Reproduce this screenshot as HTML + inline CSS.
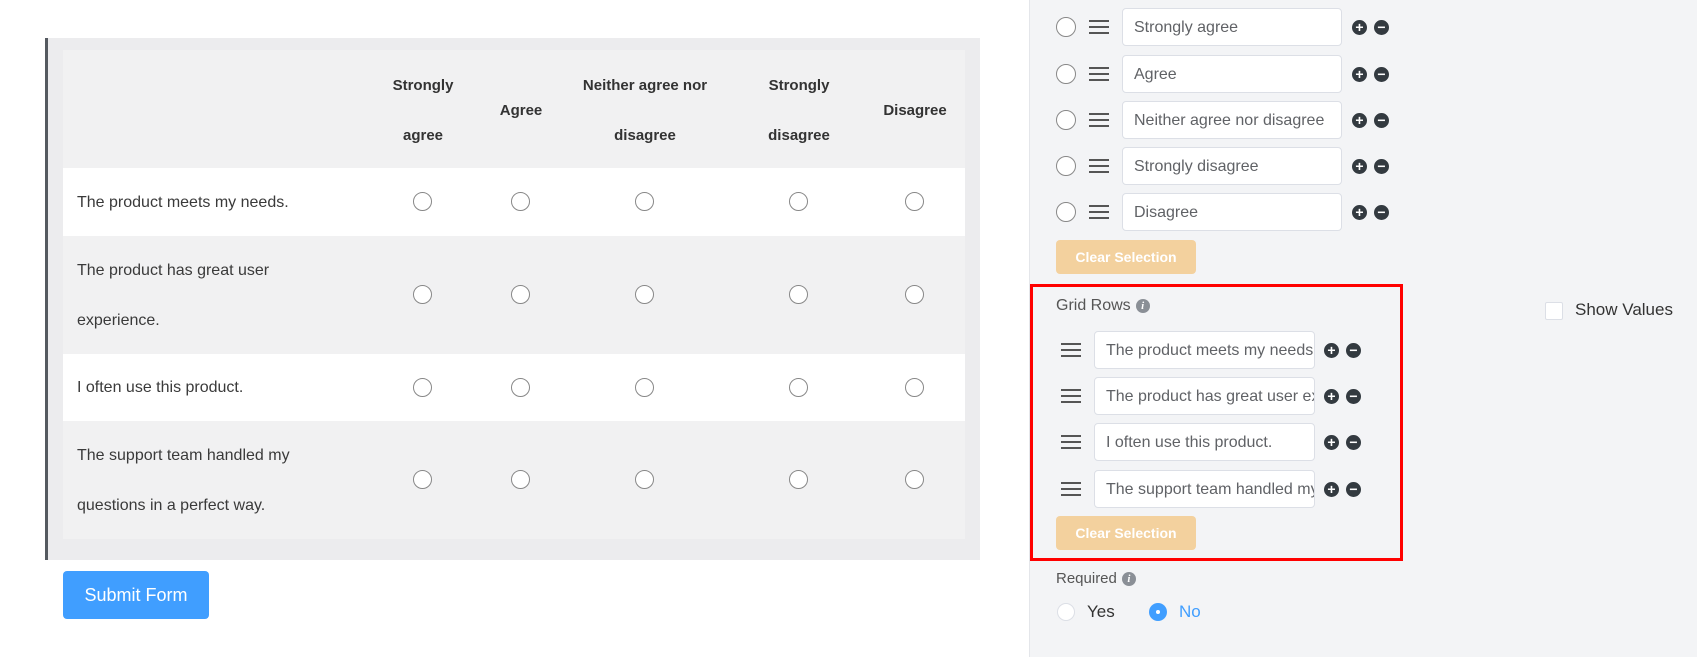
<!DOCTYPE html>
<html><head><meta charset="utf-8"><style>
*{box-sizing:border-box;margin:0;padding:0}
body{width:1697px;height:657px;position:relative;background:#fff;font-family:"Liberation Sans",sans-serif;color:#333;overflow:hidden}
.abs{position:absolute}
.box{left:45px;top:38px;width:935px;height:522px;background:#ececee;border-left:3px solid #555a60}
.tbl{left:63px;top:50px;width:902px;height:489px;background:#f1f1f2}
.row{position:absolute;left:63px;width:902px}
.hd{position:absolute;font-weight:bold;font-size:15px;text-align:center;line-height:50px;color:#333}
.rt{position:absolute;left:77px;font-size:16px;line-height:50px;color:#3a3a3a}
.rd{position:absolute;width:19px;height:19px;border:1px solid #888;border-radius:50%;background:#fff}
.panel{left:1029px;top:0;width:668px;height:657px;background:#f3f4f6;border-left:1px solid #e4e6ea}
.inp{position:absolute;height:38px;background:#fff;border:1px solid #dcdfe6;border-radius:4px;font-size:16px;color:#606266;line-height:38px;padding-left:11px;overflow:hidden;white-space:nowrap}
.ham{position:absolute;width:20px;height:14px;border-top:2px solid #555;border-bottom:2px solid #555}
.ham:after{content:"";position:absolute;left:0;right:0;top:4px;border-top:2px solid #555}
.ic{position:absolute;width:15px;height:15px;border-radius:50%;background:#333a40;color:#fff;font-weight:bold;font-size:14px;line-height:15px;text-align:center}
.btn{position:absolute;left:1056px;width:140px;height:34px;background:#f3d19e;border-radius:4px;color:#fff;font-weight:bold;font-size:14px;line-height:34px;text-align:center}
.lab{position:absolute;font-size:16px;color:#555}
.info{display:inline-block;width:14px;height:14px;border-radius:50%;background:#8a8f96;color:#fff;font-size:11px;font-style:italic;font-weight:bold;text-align:center;line-height:14px;vertical-align:1px;margin-left:5px;font-family:"Liberation Serif",serif}
</style></head><body>
<div class="abs box"></div>
<div class="abs tbl"></div>
<div class="row" style="top:168px;height:68px;background:#fff"></div>
<div class="row" style="top:354px;height:67px;background:#fff"></div>

<div class="hd" style="left:383px;top:61px;width:80px">Strongly<br>agree</div>
<div class="hd" style="left:491px;top:86px;width:60px">Agree</div>
<div class="hd" style="left:565px;top:61px;width:160px">Neither agree nor<br>disagree</div>
<div class="hd" style="left:759px;top:61px;width:80px">Strongly<br>disagree</div>
<div class="hd" style="left:870px;top:86px;width:90px">Disagree</div>

<div class="rt" style="top:178px">The product meets my needs.</div>
<div class="rt" style="top:246px">The product has great user<br>experience.</div>
<div class="rt" style="top:363px">I often use this product.</div>
<div class="rt" style="top:431px">The support team handled my<br>questions in a perfect way.</div>

<div id="radios"></div>

<div class="abs" style="left:63px;top:571px;width:146px;height:48px;background:#409eff;border-radius:4px;color:#fff;font-size:18px;line-height:48px;text-align:center">Submit Form</div>

<div class="abs panel"></div>

<div id="opts"></div>
<div class="btn" style="top:240px">Clear Selection</div>

<div class="abs" style="left:1030px;top:284px;width:373px;height:277px;border:3px solid #f00"></div>
<div class="lab" style="left:1056px;top:297px">Grid Rows<span class="info">i</span></div>
<div id="grows"></div>
<div class="btn" style="top:516px">Clear Selection</div>

<div class="lab" style="left:1056px;top:570px;font-size:15px">Required<span class="info">i</span></div>
<div class="abs" style="left:1057px;top:603px;width:18px;height:18px;border-radius:50%;background:#fff;border:1px solid #dcdfe6"></div>
<div class="lab" style="left:1087px;top:602px;font-size:17px;color:#333">Yes</div>
<div class="abs" style="left:1149px;top:603px;width:18px;height:18px;border-radius:50%;background:#409eff"></div>
<div class="abs" style="left:1156px;top:610px;width:4px;height:4px;border-radius:50%;background:#fff"></div>
<div class="lab" style="left:1179px;top:602px;font-size:17px;color:#409eff">No</div>

<div class="abs" style="left:1545px;top:302px;width:18px;height:18px;background:#fff;border:1px solid #dcdfe6;border-radius:2px"></div>
<div class="lab" style="left:1575px;top:300px;font-size:17px;color:#333">Show Values</div>

<script>
var cx=[423,521,645,799,915],cy=[202,295,388,480],h="";
cy.forEach(function(y){cx.forEach(function(x){h+='<div class="rd" style="left:'+(x-10)+'px;top:'+(y-10)+'px"></div>'})});
document.getElementById('radios').innerHTML=h;
var o=["Strongly agree","Agree","Neither agree nor disagree","Strongly disagree","Disagree"],oy=[27,74,120,166,212];h="";
o.forEach(function(t,i){var y=oy[i];
h+='<div class="rd" style="left:1056px;top:'+(y-10)+'px;width:20px;height:20px"></div>';
h+='<div class="ham" style="left:1089px;top:'+(y-7)+'px"></div>';
h+='<div class="inp" style="left:1122px;top:'+(y-19)+'px;width:220px">'+t+'</div>';
h+='<div class="ic" style="left:1352px;top:'+(y-7)+'px">+</div><div class="ic" style="left:1374px;top:'+(y-7)+'px">&minus;</div>';});
document.getElementById('opts').innerHTML=h;
var g=["The product meets my needs.","The product has great user experience.","I often use this product.","The support team handled my questions"],gy=[350,396,442,489];h="";
g.forEach(function(t,i){var y=gy[i];
h+='<div class="ham" style="left:1061px;top:'+(y-7)+'px"></div>';
h+='<div class="inp" style="left:1094px;top:'+(y-19)+'px;width:221px">'+t+'</div>';
h+='<div class="ic" style="left:1324px;top:'+(y-7)+'px">+</div><div class="ic" style="left:1346px;top:'+(y-7)+'px">&minus;</div>';});
document.getElementById('grows').innerHTML=h;
</script>
</body></html>
